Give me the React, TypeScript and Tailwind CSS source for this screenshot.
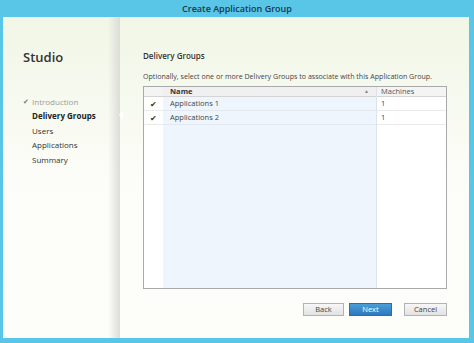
import React from 'react';

const steps = [
  { name: 'Introduction', done: true },
  { name: 'Delivery Groups', active: true },
  { name: 'Users' },
  { name: 'Applications' },
  { name: 'Summary' },
];

const groups = [
  { name: 'Applications 1', machines: 1 },
  { name: 'Applications 2', machines: 1 },
];

export default function App() {
  return (
    <div
      className="w-[474px] h-[343px] bg-[#5ac6e7] flex flex-col overflow-hidden"
      style={{ fontFamily: '"Open Sans", "Noto Sans", sans-serif' }}
    >
      <div className="h-[17px] flex items-center justify-center text-[9px] text-[#16394c] font-semibold">
        Create Application Group
      </div>

      <div className="flex-1 ml-[3px] mr-[5px] mb-[5px] flex bg-gradient-to-b from-[#f1f6e6] via-[#fcfdf8] to-[#fdfdf9]">
        {/* steps */}
        <div className="w-[117px] relative flex">
          <div className="flex-1 pt-[31px] pl-[20px]">
            <div className="text-[13px] font-semibold text-[#333]">Studio</div>
            <div className="mt-[28px] flex flex-col gap-[3px] text-[8px] leading-[11.5px]">
              {steps.map(s => (
                <div key={s.name} className="flex items-center">
                  <span className="w-[9px] text-[7px] text-[#777]">{s.done ? '✔' : ''}</span>
                  <span
                    className={
                      s.active
                        ? 'font-bold text-[#222]'
                        : s.done
                        ? 'text-[#999]'
                        : 'text-[#333]'
                    }
                  >
                    {s.name}
                  </span>
                </div>
              ))}
            </div>
          </div>
          <div className="w-[12px] bg-gradient-to-r from-transparent to-[#dcdcd8]" />
          <div className="absolute right-[-3px] top-[94px] w-0 h-0 border-y-[4px] border-y-transparent border-r-[4px] border-r-white" />
        </div>

        {/* page */}
        <div className="flex-1 flex flex-col pl-[23px] pr-[22px] pt-[34px]">
          <div className="text-[8px] font-semibold text-[#333] leading-[10px]">Delivery Groups</div>
          <div className="mt-[10px] text-[7.1px] text-[#444] leading-[10px] whitespace-nowrap">
            Optionally, select one or more Delivery Groups to associate with this Application Group.
          </div>

          <div className="mt-[5px] h-[203px] border border-[#a9a9a9] bg-white flex text-[7.5px] text-[#333]">
            <div className="w-[19px] flex flex-col">
              <div className="h-[10px] border-b border-[#d4d4d4] bg-[#f4f4f4]" />
              {groups.map(g => (
                <div key={g.name} className="h-[14px] flex items-center justify-center border-b border-[#eaeaea] text-[8px] text-[#333]">
                  ✔
                </div>
              ))}
            </div>
            <div className="w-[214px] flex flex-col bg-[#eef5fd] border-r border-[#dde3ea]">
              <div className="h-[10px] flex items-center justify-between px-[7px] border-b border-[#d4d4d4] bg-[#f0f0f0] font-bold text-[#333]">
                <span>Name</span>
                <span className="text-[5px] text-[#888]">▲</span>
              </div>
              {groups.map(g => (
                <div key={g.name} className="h-[14px] flex items-center px-[7px] border-b border-[#e1e8f0] text-[#444]">
                  {g.name}
                </div>
              ))}
            </div>
            <div className="flex-1 flex flex-col">
              <div className="h-[10px] flex items-center px-[4px] border-b border-[#d4d4d4] bg-[#f4f4f4] text-[#555]">
                Machines
              </div>
              {groups.map(g => (
                <div key={g.name} className="h-[14px] flex items-center px-[4px] border-b border-[#eaeaea] text-[#444]">
                  {g.machines}
                </div>
              ))}
            </div>
          </div>

          <div className="mt-[14px] flex justify-end text-[7.5px]">
            <button className="w-[41px] h-[13px] border border-[#b3b3b3] bg-gradient-to-b from-[#f7f7f7] to-[#e2e2e2] text-[#444]">
              Back
            </button>
            <button className="ml-[5px] w-[43px] h-[13px] border border-[#2a6fa8] bg-gradient-to-b from-[#4b9fd9] to-[#2d78bd] text-white">
              Next
            </button>
            <button className="ml-[12px] w-[43px] h-[13px] border border-[#b3b3b3] bg-gradient-to-b from-[#f7f7f7] to-[#e2e2e2] text-[#444]">
              Cancel
            </button>
          </div>
        </div>
      </div>
    </div>
  );
}
